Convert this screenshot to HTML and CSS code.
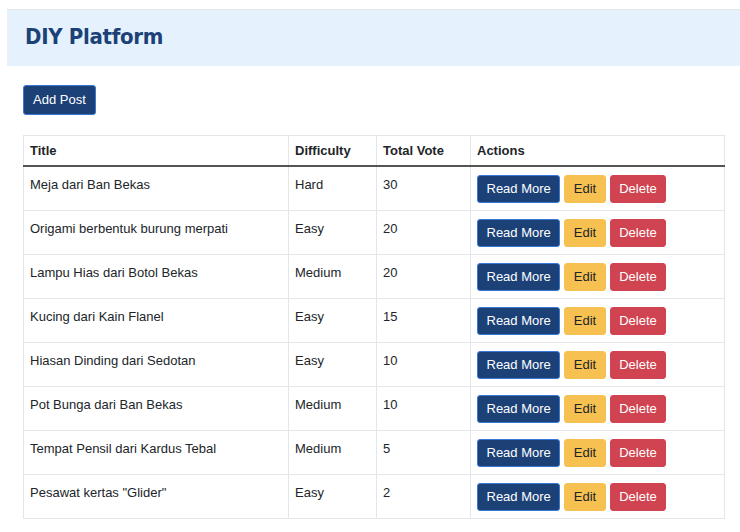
FILE: index.html
```html
<!DOCTYPE html>
<html>
<head>
<meta charset="utf-8">
<link rel="stylesheet" href="styles.css">
</head>
<body>
<header class="topbar"><h1 class="brand">DIY Platform</h1></header>
<main class="content">
  <button class="btn btn-primary btn-add">Add Post</button>
  <table class="posts">
    <thead>
      <tr><th class="c-title">Title</th><th class="c-diff">Difficulty</th><th class="c-vote">Total Vote</th><th class="c-act">Actions</th></tr>
    </thead>
    <tbody>
      <tr><td>Meja dari Ban Bekas</td><td>Hard</td><td>30</td><td class="acts"><button class="btn btn-primary">Read More</button><button class="btn btn-warn">Edit</button><button class="btn btn-danger">Delete</button></td></tr>
      <tr><td>Origami berbentuk burung merpati</td><td>Easy</td><td>20</td><td class="acts"><button class="btn btn-primary">Read More</button><button class="btn btn-warn">Edit</button><button class="btn btn-danger">Delete</button></td></tr>
      <tr><td>Lampu Hias dari Botol Bekas</td><td>Medium</td><td>20</td><td class="acts"><button class="btn btn-primary">Read More</button><button class="btn btn-warn">Edit</button><button class="btn btn-danger">Delete</button></td></tr>
      <tr><td>Kucing dari Kain Flanel</td><td>Easy</td><td>15</td><td class="acts"><button class="btn btn-primary">Read More</button><button class="btn btn-warn">Edit</button><button class="btn btn-danger">Delete</button></td></tr>
      <tr><td>Hiasan Dinding dari Sedotan</td><td>Easy</td><td>10</td><td class="acts"><button class="btn btn-primary">Read More</button><button class="btn btn-warn">Edit</button><button class="btn btn-danger">Delete</button></td></tr>
      <tr><td>Pot Bunga dari Ban Bekas</td><td>Medium</td><td>10</td><td class="acts"><button class="btn btn-primary">Read More</button><button class="btn btn-warn">Edit</button><button class="btn btn-danger">Delete</button></td></tr>
      <tr><td>Tempat Pensil dari Kardus Tebal</td><td>Medium</td><td>5</td><td class="acts"><button class="btn btn-primary">Read More</button><button class="btn btn-warn">Edit</button><button class="btn btn-danger">Delete</button></td></tr>
      <tr><td>Pesawat kertas "Glider"</td><td>Easy</td><td>2</td><td class="acts"><button class="btn btn-primary">Read More</button><button class="btn btn-warn">Edit</button><button class="btn btn-danger">Delete</button></td></tr>
    </tbody>
  </table>
</main>
</body>
</html>
```
FILE: styles.css
```css
html, body { margin: 0; padding: 0; background: #fff; }
body { font-family: "Liberation Sans", Arial, sans-serif; color: #212529; }
.topbar {
  margin: 9px 0 0 7px;
  height: 57px;
  background: #e5f2fd;
  border-top: 1px solid #e2e4e6;
  box-sizing: border-box;
  display: flex;
  align-items: center;
  padding-left: 18px;
  padding-bottom: 3px;
}
.brand {
  margin: 0;
  font-family: "DejaVu Sans Condensed", "DejaVu Sans", sans-serif;
  font-stretch: condensed;
  font-weight: bold;
  font-size: 22px;
  letter-spacing: -0.3px;
  color: #1c4177;
}
.content { padding: 19px 15px 0 23px; }
.btn {
  font-family: "Liberation Sans", Arial, sans-serif;
  font-size: 13px;
  border-radius: 3px;
  border: 1px solid transparent;
  cursor: pointer;
  padding: 0 8.5px;
  height: 28px;
  line-height: 26px;
}
.btn-add { height: 30px; line-height: 28px; padding: 0 9px; display: block; }
.btn-primary { background: #1c4177; color: #fff; border-color: #3a78d6; }
.btn-warn { background: #f6c150; color: #212529; border-color: #f6c150; }
.btn-danger { background: #cf4450; color: #fff; border-color: #cf4450; }
.posts {
  margin-top: 20px;
  width: 702px;
  border-collapse: collapse;
  font-size: 13px;
}
.posts th, .posts td {
  border: 1px solid #e3e6ea;
  text-align: left;
  vertical-align: top;
  padding: 8px 6px;
  line-height: 18px;
}
.posts thead th { border-bottom: 2px solid #555; padding: 6px 6px 5px; height: 18px; font-weight: bold; }
.posts tbody td { padding: 9px 6px 7px; }
.posts tbody td.acts { padding: 8px 6px 7px; }
.c-title { width: 252px; }
.c-diff { width: 75px; }
.c-vote { width: 81px; }
.acts .btn { margin-right: 4px; vertical-align: top; }
```
